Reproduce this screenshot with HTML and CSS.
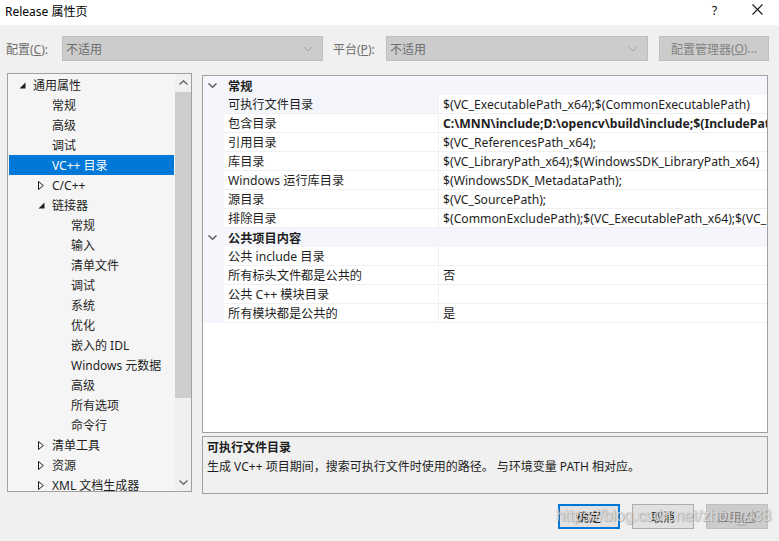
FILE: index.html
```html
<!DOCTYPE html>
<html lang="zh-CN">
<head>
  <meta charset="UTF-8" />
  <title>Release 属性页</title>
  <link rel="stylesheet" href="styles.css">
</head>
<body>
  <div class="dialog">
    <div class="titlebar">
      <span class="title">Release 属性页</span>
      <span class="title-help">?</span>
      <span class="title-close">
        <svg width="11" height="11" viewBox="0 0 11 11"><path d="M0.5 0.5 L10.5 10.5 M10.5 0.5 L0.5 10.5" stroke="#1a1a1a" stroke-width="1.1" fill="none"/></svg>
      </span>
    </div>

    <div class="toolbar">
      <span class="tb-label">配置(<u>C</u>):</span>
      <div class="combo combo-config">
        <span>不适用</span>
        <svg class="combo-arrow" width="10" height="6" viewBox="0 0 10 6"><path d="M0.5 0.5 L5 5 L9.5 0.5" stroke="#a6a6a6" fill="none"/></svg>
      </div>
      <span class="tb-label tb-platform">平台(<u>P</u>):</span>
      <div class="combo combo-platform">
        <span>不适用</span>
        <svg class="combo-arrow" width="10" height="6" viewBox="0 0 10 6"><path d="M0.5 0.5 L5 5 L9.5 0.5" stroke="#a6a6a6" fill="none"/></svg>
      </div>
      <div class="btn btn-disabled btn-manager">配置管理器(<u>O</u>)...</div>
    </div>

    <div class="main">
      <div class="tree">
        <div class="tree-list">
          <div class="node lv0"><span class="tw"><svg width="7" height="7" viewBox="0 0 7 7"><path d="M6.5 0.5 L6.5 6.5 L0.5 6.5 Z" fill="#1e1e1e"/></svg></span>通用属性</div>
          <div class="node lv1"><span class="tw"></span>常规</div>
          <div class="node lv1"><span class="tw"></span>高级</div>
          <div class="node lv1"><span class="tw"></span>调试</div>
          <div class="node lv1 selected"><span class="tw"></span>VC++ 目录</div>
          <div class="node lv1"><span class="tw"><svg width="6" height="9" viewBox="0 0 6 9"><path d="M0.5 0.5 L5.3 4.5 L0.5 8.5 Z" fill="none" stroke="#1e1e1e"/></svg></span>C/C++</div>
          <div class="node lv1"><span class="tw"><svg width="7" height="7" viewBox="0 0 7 7"><path d="M6.5 0.5 L6.5 6.5 L0.5 6.5 Z" fill="#1e1e1e"/></svg></span>链接器</div>
          <div class="node lv2"><span class="tw"></span>常规</div>
          <div class="node lv2"><span class="tw"></span>输入</div>
          <div class="node lv2"><span class="tw"></span>清单文件</div>
          <div class="node lv2"><span class="tw"></span>调试</div>
          <div class="node lv2"><span class="tw"></span>系统</div>
          <div class="node lv2"><span class="tw"></span>优化</div>
          <div class="node lv2"><span class="tw"></span>嵌入的 IDL</div>
          <div class="node lv2"><span class="tw"></span>Windows 元数据</div>
          <div class="node lv2"><span class="tw"></span>高级</div>
          <div class="node lv2"><span class="tw"></span>所有选项</div>
          <div class="node lv2"><span class="tw"></span>命令行</div>
          <div class="node lv1"><span class="tw"><svg width="6" height="9" viewBox="0 0 6 9"><path d="M0.5 0.5 L5.3 4.5 L0.5 8.5 Z" fill="none" stroke="#1e1e1e"/></svg></span>清单工具</div>
          <div class="node lv1"><span class="tw"><svg width="6" height="9" viewBox="0 0 6 9"><path d="M0.5 0.5 L5.3 4.5 L0.5 8.5 Z" fill="none" stroke="#1e1e1e"/></svg></span>资源</div>
          <div class="node lv1"><span class="tw"><svg width="6" height="9" viewBox="0 0 6 9"><path d="M0.5 0.5 L5.3 4.5 L0.5 8.5 Z" fill="none" stroke="#1e1e1e"/></svg></span>XML 文档生成器</div>
        </div>
        <div class="scrollbar">
          <div class="sb-arrow"><svg width="9" height="5" viewBox="0 0 9 5"><path d="M0.5 4.5 L4.5 0.8 L8.5 4.5" stroke="#606060" stroke-width="1.3" fill="none"/></svg></div>
          <div class="sb-track"><div class="sb-thumb"></div></div>
          <div class="sb-arrow"><svg width="9" height="5" viewBox="0 0 9 5"><path d="M0.5 0.5 L4.5 4.2 L8.5 0.5" stroke="#606060" stroke-width="1.3" fill="none"/></svg></div>
        </div>
      </div>

      <div class="right">
        <div class="grid">
          <div class="cat"><span class="gutter"><svg width="9" height="5" viewBox="0 0 9 5"><path d="M0.5 0.5 L4.5 4.2 L8.5 0.5" stroke="#505050" stroke-width="1.3" fill="none"/></svg></span><span class="cat-name">常规</span></div>
          <div class="prop current"><span class="gutter"></span><span class="pname">可执行文件目录</span><span class="pval">$(VC_ExecutablePath_x64);$(CommonExecutablePath)</span></div>
          <div class="prop"><span class="gutter"></span><span class="pname">包含目录</span><span class="pval bold">C:\MNN\include;D:\opencv\build\include;$(IncludePath)</span></div>
          <div class="prop"><span class="gutter"></span><span class="pname">引用目录</span><span class="pval">$(VC_ReferencesPath_x64);</span></div>
          <div class="prop"><span class="gutter"></span><span class="pname">库目录</span><span class="pval">$(VC_LibraryPath_x64);$(WindowsSDK_LibraryPath_x64)</span></div>
          <div class="prop"><span class="gutter"></span><span class="pname">Windows 运行库目录</span><span class="pval">$(WindowsSDK_MetadataPath);</span></div>
          <div class="prop"><span class="gutter"></span><span class="pname">源目录</span><span class="pval">$(VC_SourcePath);</span></div>
          <div class="prop"><span class="gutter"></span><span class="pname">排除目录</span><span class="pval">$(CommonExcludePath);$(VC_ExecutablePath_x64);$(VC_LibraryPath_x64)</span></div>
          <div class="cat"><span class="gutter"><svg width="9" height="5" viewBox="0 0 9 5"><path d="M0.5 0.5 L4.5 4.2 L8.5 0.5" stroke="#505050" stroke-width="1.3" fill="none"/></svg></span><span class="cat-name">公共项目内容</span></div>
          <div class="prop"><span class="gutter"></span><span class="pname">公共 include 目录</span><span class="pval"></span></div>
          <div class="prop"><span class="gutter"></span><span class="pname">所有标头文件都是公共的</span><span class="pval">否</span></div>
          <div class="prop"><span class="gutter"></span><span class="pname">公共 C++ 模块目录</span><span class="pval"></span></div>
          <div class="prop"><span class="gutter"></span><span class="pname">所有模块都是公共的</span><span class="pval">是</span></div>
        </div>
        <div class="desc">
          <div class="desc-title">可执行文件目录</div>
          <div class="desc-text">生成 VC++ 项目期间，搜索可执行文件时使用的路径。 与环境变量 PATH 相对应。</div>
        </div>
      </div>
    </div>

    <div class="footer">
      <div class="btn btn-default">确定</div>
      <div class="btn">取消</div>
      <div class="btn btn-disabled">应用(<u>A</u>)</div>
      <span class="watermark">https://blog.csdn.net/zhou_438</span>
    </div>
  </div>
</body>
</html>
```

FILE: styles.css
```css
body {
  margin: 0;
  background: #f0f0f0;
  font-family: "Noto Sans", "Noto Sans CJK SC", sans-serif;
  font-size: 12px;
  color: #1e1e1e;
  overflow: hidden;
}
u {
  text-decoration: underline;
  text-underline-offset: 1px;
}
.dialog {
  width: 779px;
  height: 541px;
  position: relative;
}
.titlebar {
  height: 25px;
  background: #ffffff;
  display: flex;
  align-items: center;
  color: #000;
}
.title {
  padding-left: 5px;
  flex: 1;
  margin-top: -4px;
}
.title-help {
  width: 40px;
  margin-top: -4px;
}
.title-close {
  width: 27px;
  margin-top: -4px;
}
.toolbar {
  display: flex;
  align-items: center;
  height: 25px;
  padding: 11px 0 12px 6px;
}
.tb-label {
  color: #6d6d6d;
  width: 56px;
}
.tb-platform {
  margin-left: 10px;
  width: 53px;
}
.combo {
  height: 23px;
  background: #cccccc;
  border: 1px solid #bfbfbf;
  color: #6d6d6d;
  display: flex;
  align-items: center;
  padding: 0 9px 0 3px;
  box-sizing: content-box;
}
.combo span {
  flex: 1;
}
.combo-config {
  width: 247px;
}
.combo-platform {
  width: 248px;
}
.btn {
  height: 23px;
  width: 60px;
  background: #e1e1e1;
  border: 1px solid #adadad;
  display: flex;
  align-items: center;
  justify-content: center;
  color: #1e1e1e;
}
.btn-disabled {
  background: #cccccc;
  border-color: #bfbfbf;
  color: #838383;
}
.btn-manager {
  width: 108px;
  margin-left: 11px;
}
.btn-default {
  border: 2px solid #0078d7;
  height: 21px;
  width: 58px;
}
.main {
  display: flex;
  padding-left: 7px;
  gap: 10px;
}
.tree {
  width: 183px;
  height: 417px;
  border: 1px solid #a0a0a0;
  background: #f5f5f5;
  display: flex;
}
.tree-list {
  flex: 1;
  padding: 1px 1px 0 1px;
  overflow: hidden;
}
.node {
  height: 20px;
  display: flex;
  align-items: center;
  white-space: nowrap;
}
.node .tw {
  width: 15px;
  display: inline-flex;
  align-items: center;
}
.lv0 { padding-left: 9px; }
.lv1 { padding-left: 28px; }
.lv2 { padding-left: 47px; }
.lv1 .tw svg { margin-left: 1px; }
.lv0 .tw svg, .lv1 .tw svg[width="7"] { margin-left: 1px; margin-top: 1px; }
.node.selected {
  background: #0078d7;
  color: #ffffff;
}
.scrollbar {
  width: 16px;
  background: #f0f0f0;
  display: flex;
  flex-direction: column;
}
.sb-arrow {
  height: 17px;
  display: flex;
  align-items: center;
  justify-content: center;
}
.sb-track {
  flex: 1;
  padding-top: 1px;
}
.sb-thumb {
  height: 306px;
  background: #cdcdcd;
}
.right {
  width: 566px;
  padding-top: 2px;
  display: flex;
  flex-direction: column;
  gap: 3px;
}
.grid {
  height: 356px;
  border: 1px solid #a0a0a0;
  background: #ffffff;
  overflow: hidden;
  font-size: 12.2px;
}
.cat, .prop {
  height: 19px;
  display: flex;
  align-items: stretch;
  white-space: nowrap;
}
.cat {
  background: #f4f6fb;
}
.gutter {
  width: 21px;
  flex: none;
  background: #f4f6fb;
  display: flex;
  align-items: center;
  justify-content: center;
}
.cat .gutter svg {
  margin-left: -2px;
}
.cat-name {
  font-weight: bold;
  padding-left: 4px;
  display: flex;
  align-items: center;
}
.pname, .pval {
  display: flex;
  align-items: center;
  border-bottom: 1px solid #f0f0f0;
  box-sizing: border-box;
  overflow: hidden;
}
.pname {
  width: 215px;
  flex: none;
  padding-left: 4px;
  border-right: 1px solid #f0f0f0;
}
.pval {
  flex: 1;
  padding-left: 4px;
}
.prop.current .pname {
  background: #f4f6fb;
}
.bold {
  font-weight: bold;
}
.desc {
  border: 1px solid #a0a0a0;
  background: #f0f0f0;
  padding: 2px 4px;
  box-sizing: border-box;
  height: 58px;
}
.desc-title {
  font-weight: bold;
  height: 18px;
  line-height: 18px;
}
.desc-text {
  line-height: 20px;
}
.footer {
  display: flex;
  justify-content: flex-end;
  gap: 12px;
  padding: 10px 11px 0 0;
}
.watermark {
  position: absolute;
  left: 556px;
  top: 507px;
  font-family: "Liberation Sans", sans-serif;
  font-size: 15.8px;
  color: rgba(236, 236, 236, 0.8);
  text-shadow: 1px 1px 1px rgba(90, 90, 90, 0.35), 0 0 1px rgba(90, 90, 90, 0.4);
  pointer-events: none;
}
```
